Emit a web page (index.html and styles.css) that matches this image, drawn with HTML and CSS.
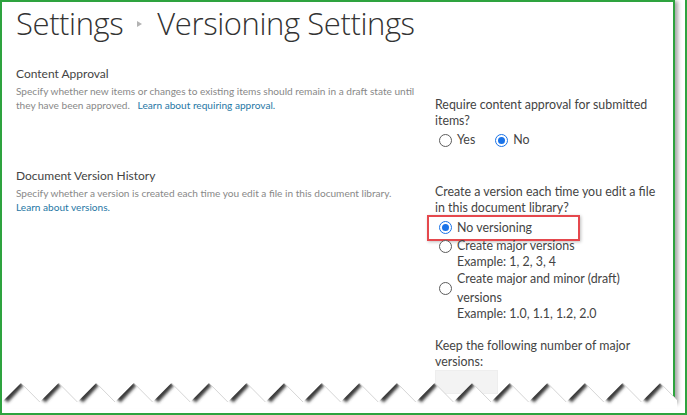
FILE: index.html
```html
<!DOCTYPE html>
<html>
<head>
<meta charset="utf-8">
<link rel="stylesheet" href="styles.css">
</head>
<body>
<div class="frame">
  <div class="page">
    <h1 class="title"><span>Settings</span><span class="crumb-arrow"></span><span>Versioning Settings</span></h1>

    <div class="section s1">
      <div class="left">
        <h2 class="sec-title">Content Approval</h2>
        <p class="desc">Specify whether new items or changes to existing items should remain in a draft state until<br>they have been approved. &nbsp; <a class="link">Learn about requiring approval.</a></p>
      </div>
      <div class="right r1">
        <div class="q">Require content approval for submitted items?</div>
        <div class="inline-radios">
          <div class="opt"><span class="radio"></span><span>Yes</span></div>
          <div class="opt"><span class="radio on"></span><span>No</span></div>
        </div>
      </div>
    </div>

    <div class="section s2">
      <div class="left">
        <h2 class="sec-title">Document Version History</h2>
        <p class="desc">Specify whether a version is created each time you edit a file in this document library.<br><a class="link">Learn about versions.</a></p>
      </div>
      <div class="right r2">
        <div class="q">Create a version each time you edit a file in this document library?</div>
        <div class="opt-row highlighted"><span class="radio on"></span><span class="lbl">No versioning</span></div>
        <div class="opt-row"><span class="radio"></span><span class="lbl">Create major versions</span></div>
        <div class="example">Example: 1, 2, 3, 4</div>
        <div class="opt-row two-line"><span class="radio"></span><span class="lbl">Create major and minor (draft)<br>versions</span></div>
        <div class="example ex2">Example: 1.0, 1.1, 1.2, 2.0</div>
        <div class="q keep">Keep the following number of major versions:</div>
        <div class="num-input"></div>
      </div>
    </div>
  </div>

  <svg class="tear" width="675" height="30" viewBox="0 0 675 30">
    <defs>
      <filter id="blur" x="-20%" y="-50%" width="140%" height="200%">
        <feGaussianBlur stdDeviation="1.8"/>
      </filter>
      <clipPath id="below"><path id="clipshape" d=""/></clipPath>
    </defs>
    <path id="cover" fill="#fff" d=""/>
    <g clip-path="url(#below)">
      <g id="shadow" filter="url(#blur)" stroke="#3a3a3a" stroke-width="7" fill="none"></g>
    </g>
    <g id="edge" stroke="#d6d6d6" stroke-width="1" fill="none"></g>
  </svg>
</div>
<script>
(function(){
  var ns='http://www.w3.org/2000/svg';
  var period=37.6, peakY=5, valleyY=24, x0=0.2;
  var d='M0 '+valleyY;
  var sh=document.getElementById('shadow'), ed=document.getElementById('edge');
  for(var k=0;k<19;k++){
    var vx=x0+k*period, px=vx+period/2, nx=vx+period;
    d+=' L'+px+' '+peakY+' L'+nx+' '+valleyY;
    var l=document.createElementNS(ns,'line');
    l.setAttribute('x1',vx+3);l.setAttribute('y1',valleyY-2);
    l.setAttribute('x2',px);l.setAttribute('y2',peakY);
    sh.appendChild(l);
    var e=document.createElementNS(ns,'line');
    e.setAttribute('x1',px);e.setAttribute('y1',peakY);
    e.setAttribute('x2',nx);e.setAttribute('y2',valleyY);
    ed.appendChild(e);
  }
  d+=' L675 30 L0 30 Z';
  document.getElementById('cover').setAttribute('d',d);
  document.getElementById('clipshape').setAttribute('d',d);
})();
</script>
</body>
</html>
```

FILE: styles.css
```css
* { box-sizing: border-box; }
html, body { margin: 0; padding: 0; background: #fff; }
body { width: 687px; height: 415px; overflow: hidden; font-family: Lato, "Open Sans", sans-serif; }

.frame {
  position: relative;
  width: 687px;
  height: 415px;
  border-left: 2px solid #2ea33f;
  border-right: 2px solid #2ea33f;
  border-bottom: 2px solid #2ea33f;
  overflow: hidden;
}

.page {
  width: 673px;
  height: 405px;
  border-top: 2px solid #2ea33f;
  border-right: 2px solid #2ea33f;
  box-shadow: 4px 0 4px -1px rgba(0,0,0,0.35);
  padding-left: 14px;
  overflow: hidden;
  background: #fff;
}

.title {
  margin: -8px 0 0;
  height: 58px;
  display: flex;
  align-items: center;
  font-family: "Open Sans", sans-serif;
  font-weight: 300;
  font-size: 31px;
  letter-spacing: -0.4px;
  color: #333;
  line-height: 42px;
}
.crumb-arrow {
  width: 0; height: 0;
  border-top: 3.5px solid transparent;
  border-bottom: 3.5px solid transparent;
  border-left: 5px solid #b3b3b3;
  margin: 2px 15px 0 14px;
}

.section { display: flex; }
.left { width: 419px; flex: none; }
.right { width: 222px; flex: none; color: #444; font-size: 12.4px; line-height: 16px; }

.sec-title { margin: 0; font-weight: 400; font-size: 12px; line-height: 18px; color: #444; }
.desc { margin: 1px 0 0; font-size: 10.1px; line-height: 14px; color: #888; }
.link { color: #1f77a5; }

.s1 { margin-top: 13px; height: 102px; }
.r1 { padding-top: 32px; }
.inline-radios { display: flex; gap: 20px; margin-top: 3px; padding-left: 4px; }
.opt { display: flex; align-items: center; gap: 5px; }

.radio {
  width: 13px; height: 13px; flex: none;
  border: 1px solid #5c5c5c;
  border-radius: 50%;
  background: #fff;
  position: relative;
}
.radio.on { border-color: #1a73e8; }
.radio.on::after {
  content: "";
  position: absolute;
  left: 2px; top: 2px;
  width: 7px; height: 7px;
  border-radius: 50%;
  background: #1a73e8;
}

.r2 { padding-top: 17px; }
.opt-row { display: flex; align-items: center; gap: 5px; padding-left: 4px; height: 18px; position: relative; }
.opt-row.highlighted { margin-top: 2px; height: 19px; }
.opt-row.highlighted::before {
  content: "";
  position: absolute;
  left: -8px; top: -3px;
  width: 149px; height: 22px;
  border: 2px solid #e5484d;
  box-shadow: 1px 1px 3px rgba(0,0,0,0.25);
}
.opt-row.two-line { height: 38px; margin-top: 1px; }
.opt-row.two-line .lbl { line-height: 19px; }
.example { padding-left: 22px; height: 13px; line-height: 13px; }
.example.ex2 { height: 14px; line-height: 14px; }
.keep { margin-top: 17px; }
.num-input { width: 63px; height: 24px; background: #f3f3f3; border: 1px solid #eee; }

.tear { position: absolute; left: 0; top: 378px; }
```
